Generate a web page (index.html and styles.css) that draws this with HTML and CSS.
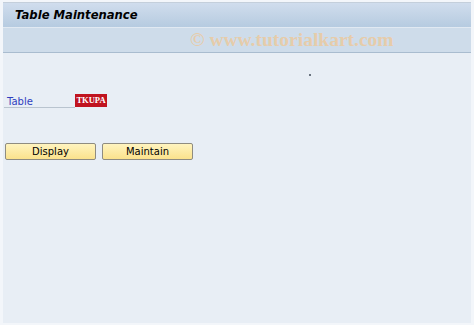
FILE: index.html
```html
<!DOCTYPE html>
<html lang="en">
<head>
    <meta charset="UTF-8">
    <title>Table Maintenance</title>
    <link rel="stylesheet" href="styles.css">
</head>
<body>
    <div class="window">
        <div class="title-bar">Table Maintenance</div>
        <div class="toolbar">
            <span class="watermark">&copy; www.tutorialkart.com</span>
        </div>
        <div class="content">
            <div class="dot-row"><span class="dot"></span></div>
            <div class="field-row">
                <label class="field-label">Table</label>
                <span class="field-value">TKUPA</span>
            </div>
            <div class="button-row">
                <button class="btn">Display</button>
                <button class="btn">Maintain</button>
            </div>
        </div>
    </div>
</body>
</html>
```

FILE: styles.css
```css
html, body {
    margin: 0;
    padding: 0;
}
body {
    width: 474px;
    height: 325px;
    background-color: #f3f6fa;
    font-family: Tahoma, "DejaVu Sans", sans-serif;
    overflow: hidden;
}
.window {
    margin: 2px 3px 3px 3px;
    height: 320px;
    display: flex;
    flex-direction: column;
    background-color: #e8eef5;
    border-top: 1px solid #c4cfdb;
}
.title-bar {
    height: 24px;
    box-sizing: border-box;
    padding: 5px 0 0 12px;
    background: linear-gradient(to bottom, #d0dded, #b6cbe0);
    font-family: "DejaVu Sans", sans-serif;
    font-weight: bold;
    font-style: italic;
    font-size: 11.6px;
    color: #000;
}
.toolbar {
    height: 26px;
    box-sizing: border-box;
    background-color: #cedcea;
    border-top: 1px solid #e1e9f2;
    border-bottom: 1px solid #a9bccf;
    padding: 1px 0 0 187px;
}
.watermark {
    font-family: "Liberation Serif", serif;
    font-size: 19.5px;
    font-weight: bold;
    color: #e6ccaa;
}
.content {
    flex: 1;
    padding: 0 0 0 1px;
}
.dot-row {
    height: 40px;
    position: relative;
}
.dot {
    position: absolute;
    left: 305px;
    top: 21px;
    width: 2px;
    height: 2px;
    background-color: #6a7480;
}
.field-row {
    display: flex;
    align-items: flex-end;
    width: 104px;
    height: 15px;
}
.field-label {
    width: 71px;
    height: 15px;
    box-sizing: border-box;
    padding: 3px 0 0 3px;
    border-bottom: 1px solid #b9c4cf;
    font-family: Tahoma, "DejaVu Sans", sans-serif;
    font-size: 10px;
    color: #2f3fbf;
    line-height: 12px;
}
.field-value {
    width: 32px;
    height: 13px;
    margin-bottom: 1px;
    background-color: #c0131f;
    color: #fff;
    font-family: "Liberation Serif", serif;
    font-size: 8.5px;
    font-weight: bold;
    line-height: 13px;
    text-align: center;
    overflow: hidden;
}
.button-row {
    display: flex;
    gap: 6px;
    margin: 35px 0 0 1px;
}
.btn {
    width: 91px;
    height: 17px;
    padding: 0;
    border: 1px solid #8f8c80;
    border-radius: 2px;
    background: linear-gradient(to bottom, #fff4bf, #fbe28c);
    font-family: Tahoma, "DejaVu Sans", sans-serif;
    font-size: 10px;
    color: #000;
}
```
